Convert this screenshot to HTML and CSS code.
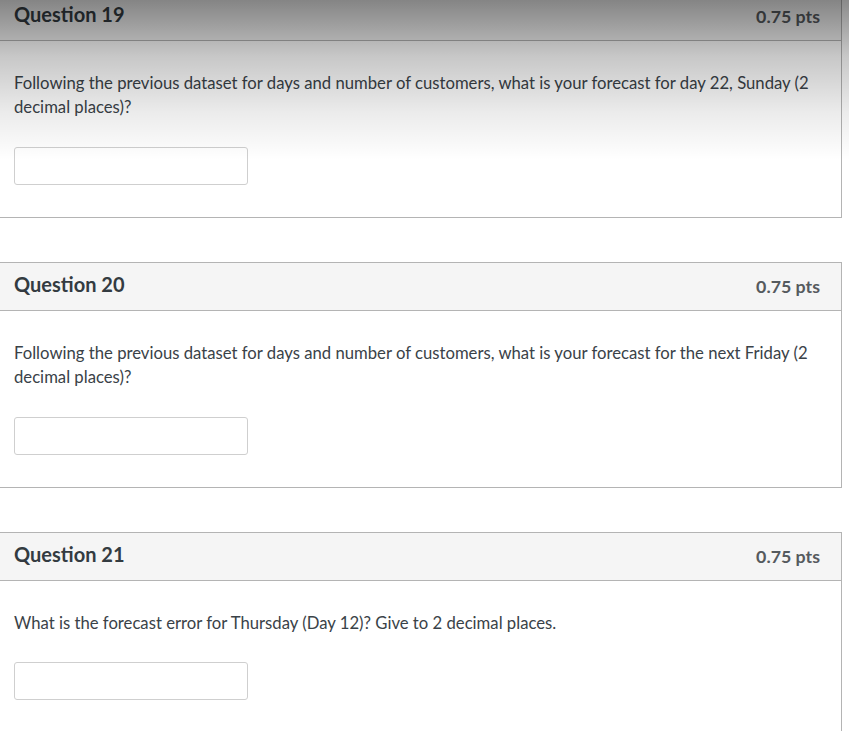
FILE: index.html
```html
<!DOCTYPE html>
<html lang="en">
<head>
    <meta charset="UTF-8">
    <meta name="viewport" content="width=device-width, initial-scale=1.0">
    <title>Quiz</title>
    <link rel="stylesheet" href="styles.css">
</head>
<body>
    <div class="top-shade"></div>

    <div class="questions">
        <div class="question">
            <div class="question-header">
                <span class="question-name">Question 19</span>
                <span class="question-points">0.75 pts</span>
            </div>
            <div class="question-body">
                <p class="question-text">Following the previous dataset for days and number of customers, what is your forecast for day 22, Sunday (2 decimal places)?</p>
                <input type="text" class="answer">
            </div>
        </div>

        <div class="question">
            <div class="question-header">
                <span class="question-name">Question 20</span>
                <span class="question-points">0.75 pts</span>
            </div>
            <div class="question-body">
                <p class="question-text">Following the previous dataset for days and number of customers, what is your forecast for the next Friday (2 decimal places)?</p>
                <input type="text" class="answer">
            </div>
        </div>

        <div class="question">
            <div class="question-header">
                <span class="question-name">Question 21</span>
                <span class="question-points">0.75 pts</span>
            </div>
            <div class="question-body">
                <p class="question-text short">What is the forecast error for Thursday (Day 12)? Give to 2 decimal places.</p>
                <input type="text" class="answer">
            </div>
        </div>
    </div>
</body>
</html>
```

FILE: styles.css
```css
body {
    font-family: Lato, "Open Sans", sans-serif;
    margin: 0;
    padding: 0;
    background-color: white;
    color: #2d3b45;
}

/* dark fade coming down from the page header above */
.top-shade {
    position: absolute;
    top: 0;
    left: 0;
    width: 100%;
    height: 160px;
    background: linear-gradient(rgba(0, 0, 0, 0.46), rgba(0, 0, 0, 0.22) 35%, rgba(0, 0, 0, 0.08) 70%, rgba(0, 0, 0, 0));
    pointer-events: none;
}

.questions {
    width: 843px;
    margin-top: -8px;
    margin-left: -1px;
}

.question {
    border: 1px solid #b4b4b4;
    margin-bottom: 44px;
}

.question-header {
    display: flex;
    justify-content: space-between;
    align-items: center;
    height: 48px;
    padding: 0 21px 0 14px;
    background-color: #f5f5f5;
    border-bottom: 1px solid #b4b4b4;
    box-sizing: border-box;
}

.question-name {
    font-size: 20px;
    font-weight: bold;
    margin-top: -6px;
    color: #333b41;
}

.question-points {
    font-size: 17.8px;
    font-weight: bold;
    margin-top: -2px;
    color: #555a5e;
}

.question-body {
    padding: 30px 14px 32px 14px;
}

.question-text {
    margin: 0 0 28px;
    font-size: 16.7px;
    line-height: 24px;
    color: #3a4248;
}

.question-text.short {
    margin-bottom: 27px;
}

.answer {
    display: block;
    width: 234px;
    height: 38px;
    box-sizing: border-box;
    border: 1px solid #cfcfcf;
    border-radius: 3px;
    background-color: white;
    padding: 6px 8px;
    font-size: 16px;
}
```
